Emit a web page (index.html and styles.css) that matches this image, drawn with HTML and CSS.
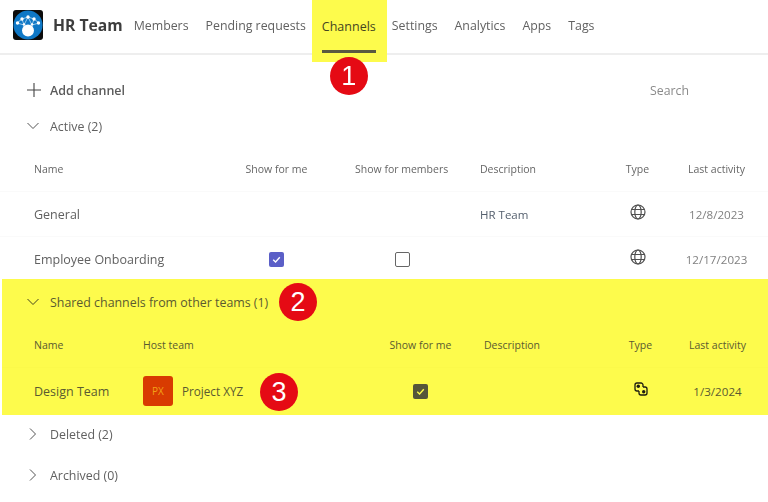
FILE: index.html
```html
<!DOCTYPE html>
<html lang="en">
<head>
<meta charset="utf-8">
<title>HR Team channels</title>
<link rel="stylesheet" href="styles.css">
</head>
<body>
<header class="topbar">
  <svg class="logo" viewBox="0 0 30 30" aria-hidden="true">
    <rect width="30" height="30" rx="3" fill="#0c0c0c"/>
    <circle cx="15" cy="15" r="14.6" fill="#0f78c6"/>
    <path d="M4 13 L9 9 L15 7 L21 9 L26 13 M9 9 L11 15 L15 7 L19 15 L21 9 M4 13 L11 15 M26 13 L19 15" stroke="#bcdcf2" stroke-width=".8" fill="none"/>
    <g fill="#fff">
      <circle cx="15" cy="20.5" r="6"/>
      <circle cx="4.5" cy="13" r="1.7"/><circle cx="25.5" cy="13" r="1.7"/>
      <circle cx="9" cy="9" r="1.7"/><circle cx="21" cy="9" r="1.7"/>
      <circle cx="15" cy="7" r="1.7"/>
      <circle cx="11" cy="14.5" r="1.3"/><circle cx="19" cy="14.5" r="1.3"/>
    </g>
  </svg>
  <span class="team-name">HR Team</span>
  <nav class="tabs">
    <a class="tab">Members</a>
    <a class="tab">Pending requests</a>
    <a class="tab tab-active"><span class="tab-label">Channels</span><span class="badge badge-one">1</span></a>
    <a class="tab">Settings</a>
    <a class="tab">Analytics</a>
    <a class="tab">Apps</a>
    <a class="tab">Tags</a>
  </nav>
</header>

<div class="toolbar">
  <svg class="plus" viewBox="0 0 14 14" aria-hidden="true"><path d="M7 0V14M0 7H14" stroke="#444" stroke-width="1.1"/></svg>
  <span class="add-label">Add channel</span>
  <span class="search">Search</span>
</div>

<section class="group">
  <div class="group-head">
    <svg class="chev" viewBox="0 0 12 12" aria-hidden="true"><path d="M.5 3 6 8.5 11.500 3" /></svg>
    <span>Active (2)</span>
  </div>
  <div class="grid grid-active head-row">
    <span>Name</span>
    <span class="mid w-show">Show for me</span>
    <span>Show for members</span>
    <span>Description</span>
    <span class="mid w-type">Type</span>
    <span class="mid w-date">Last activity</span>
  </div>
  <div class="grid grid-active row">
    <span>General</span>
    <span></span>
    <span></span>
    <span class="desc">HR Team</span>
    <span class="mid w-type icon-cell"><svg class="globe" viewBox="0 0 16 16" aria-hidden="true"><circle cx="8" cy="8" r="7"/><ellipse cx="8" cy="8" rx="3.200" ry="7"/><path d="M1.500 5.500H14.500M1.500 10.500H14.500"/></svg></span>
    <span class="mid w-date date">12/8/2023</span>
  </div>
  <div class="grid grid-active row row-last">
    <span>Employee Onboarding</span>
    <span class="mid w-show"><span class="check check-on"><svg viewBox="0 0 16 16" aria-hidden="true"><path d="M4.500 8.300 7 10.600 11.500 5.700"/></svg></span></span>
    <span class="mid w-members"><span class="check check-off"></span></span>
    <span></span>
    <span class="mid w-type icon-cell"><svg class="globe" viewBox="0 0 16 16" aria-hidden="true"><circle cx="8" cy="8" r="7"/><ellipse cx="8" cy="8" rx="3.200" ry="7"/><path d="M1.500 5.500H14.500M1.500 10.500H14.500"/></svg></span>
    <span class="mid w-date date">12/17/2023</span>
  </div>
</section>

<section class="group group-marked">
  <div class="group-head">
    <svg class="chev" viewBox="0 0 12 12" aria-hidden="true"><path d="M.5 3 6 8.5 11.500 3" /></svg>
    <span>Shared channels from other teams (1)</span>
    <span class="badge badge-two">2</span>
  </div>
  <div class="grid grid-shared head-row">
    <span>Name</span>
    <span>Host team</span>
    <span class="mid w-show">Show for me</span>
    <span>Description</span>
    <span class="mid w-type">Type</span>
    <span class="mid w-date">Last activity</span>
  </div>
  <div class="grid grid-shared row row-shared">
    <span>Design Team</span>
    <span class="host"><span class="avatar">PX</span><span>Project XYZ</span><span class="badge badge-three">3</span></span>
    <span class="mid w-show"><span class="check check-dark"><svg viewBox="0 0 16 16" aria-hidden="true"><path d="M4.500 8.300 7 10.600 11.500 5.700"/></svg></span></span>
    <span></span>
    <span class="mid w-type icon-cell icon-cell-shared"><svg class="shared" viewBox="0 0 14 14" aria-hidden="true"><path d="M9 5V3a2 2 0 0 0-2-2H3a2 2 0 0 0-2 2v4a2 2 0 0 0 2 2h2"/><path d="M5 9v2a2 2 0 0 0 2 2h4a2 2 0 0 0 2-2V7a2 2 0 0 0-2-2H9"/><circle cx="4.300" cy="4.300" r="1.700" class="dot"/><circle cx="9.700" cy="9.700" r="1.700" class="dot"/></svg></span>
    <span class="mid w-date date">1/3/2024</span>
  </div>
</section>

<section class="group group-closed">
  <div class="group-head">
    <svg class="chev" viewBox="0 0 12 12" aria-hidden="true"><path d="M3 .5 8.500 6 3 11.500" /></svg>
    <span>Deleted (2)</span>
  </div>
</section>
<section class="group group-archived">
  <div class="group-head">
    <svg class="chev" viewBox="0 0 12 12" aria-hidden="true"><path d="M3 .5 8.500 6 3 11.500" /></svg>
    <span>Archived (0)</span>
  </div>
</section>
</body>
</html>
```

FILE: styles.css
```css
* { box-sizing: border-box; }

html, body { height: 100%; }

body {
  margin: 0;
  background: #fff;
  color: #616161;
  font-family: "Open Sans", "Noto Sans", sans-serif;
  font-size: 12px;
  overflow: hidden;
  filter: blur(.3px);
}

.topbar {
  display: flex;
  align-items: center;
  height: 55px;
  padding: 0 0 3px 13px;
  border-bottom: 2px solid #eeeeee;
}

.logo { width: 30px; height: 30px; flex: none; }

.team-name {
  margin-left: 10px;
  font-size: 15.700px;
  font-weight: 700;
  color: #3d3d3d;
  white-space: nowrap;
}

.tabs {
  display: flex;
  align-items: center;
  gap: 17px;
  margin-left: 11px;
  font-size: 12.350px;
  white-space: nowrap;
}

.tab-active {
  position: relative;
  display: flex;
  align-items: center;
  height: 62px;
  margin: 6px -12px -6px -11px;
  padding: 0 11px 10px 10px;
  background: #fdfb4c;
  color: #45451f;
  font-size: 12.500px;
  font-weight: 500;
}

.tab-label::after {
  content: "";
  position: absolute;
  left: 10px;
  right: 11px;
  top: 50px;
  height: 3px;
  background: #5a5a40;
}

.badge {
  position: absolute;
  width: 38px;
  height: 38px;
  border-radius: 50%;
  background: #e50a14;
  color: #fff;
  font-family: "Liberation Sans", Arial, sans-serif;
  font-size: 27px;
  line-height: 38px;
  text-align: center;
  font-weight: 400;
}

.badge-one { left: 18px; top: 57px; z-index: 2; }
.badge-two { left: 277px; top: -1px; }
.badge-three { left: 117px; top: -3px; }

.toolbar {
  display: flex;
  align-items: center;
  height: 53px;
  padding: 17px 0 0 27px;
}

.plus { width: 14px; height: 14px; flex: none; }

.add-label {
  margin-left: 9px;
  font-size: 12.500px;
  font-weight: 600;
  color: #5c5c5c;
}

.search {
  margin-left: 525px;
  font-size: 12.300px;
  color: #8a8a8a;
}

.group-head {
  position: relative;
  display: flex;
  align-items: center;
  height: 36px;
  padding-left: 27px;
  font-size: 12.400px;
  white-space: nowrap;
}

.chev {
  width: 12px;
  height: 12px;
  margin-right: 11px;
  flex: none;
  fill: none;
  stroke: #555;
  stroke-width: 1;
}

.grid {
  display: grid;
  align-items: center;
  padding-left: 34px;
  white-space: nowrap;
}

.grid-active { grid-template-columns: 211px 110px 125px 146px 62px 57px; }
.grid-shared { grid-template-columns: 109px 246px 95px 145px 60px 57px; }

.head-row {
  height: 45px;
  margin-top: 2px;
  font-size: 10.500px;
  color: #666;
}

.row {
  height: 45px;
  border-top: 1px solid #fafafa;
  font-size: 12.500px;
}

.row-last { margin-bottom: -2px; }

.mid { display: flex; justify-content: center; }
.w-show { width: 63px; }
.w-members { width: 94px; }
.w-type { width: 23px; }
.w-date { width: 57px; }

.date { color: #808080; font-size: 11.600px; }
.desc { color: #55606e; font-size: 11.500px; }
.icon-cell { margin-top: -4px; }
.icon-cell-shared { margin-top: -6px; }

.globe {
  width: 16px;
  height: 16px;
  fill: none;
  stroke: #505050;
  stroke-width: 1.200;
}

.check {
  display: block;
  width: 15px;
  height: 15px;
  border-radius: 2px;
}

.check svg {
  display: block;
  width: 15px;
  height: 15px;
  fill: none;
  stroke: #fff;
  stroke-width: 1.500;
}

.check-on { background: #5b5fc7; }
.check-off { border: 1px solid #666; }
.check-dark { background: #55553a; }
.check-dark svg { stroke: #fdfb4c; }

.group-marked {
  position: relative;
  height: 136px;
  margin-left: 2px;
  padding-top: 5px;
  background: #fdfb4c;
  color: #5a5a30;
}

.group-marked .group-head { padding-left: 25px; }
.group-marked .grid { padding-left: 32px; }
.group-marked .head-row,
.group-marked .date { color: #5a5a30; }

.row-shared { height: 47px; padding-top: 1px; border-top-color: #fbf94a; }

.group-marked .chev { stroke: #45451f; }

.host {
  position: relative;
  display: flex;
  align-items: center;
  gap: 9px;
  margin-top: -2px;
  font-size: 11.700px;
}

.avatar {
  display: flex;
  align-items: center;
  justify-content: center;
  width: 30px;
  height: 30px;
  border-radius: 3px;
  background: #d83b01;
  color: #f2a018;
  font-size: 10px;
}

.shared {
  width: 14px;
  height: 14px;
  fill: none;
  stroke: #1c1c10;
  stroke-width: 1.300;
}

.shared .dot { fill: #1c1c10; stroke: none; }

.group-closed { margin-top: 1px; }
.group-archived { margin-top: 5px; }
```
